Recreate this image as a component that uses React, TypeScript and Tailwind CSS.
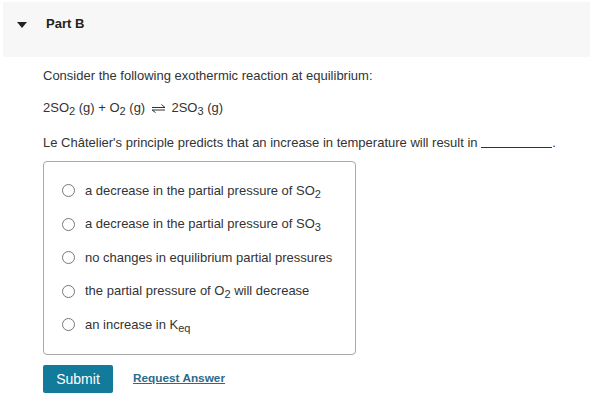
import React, { useState } from 'react';

const Sub = ({ children }: { children: React.ReactNode }) => (
  <sub className="text-[11px] relative top-[3px] align-baseline">{children}</sub>
);

const options = [
  { id: 'a', label: <>a decrease in the partial pressure of SO<Sub>2</Sub></> },
  { id: 'b', label: <>a decrease in the partial pressure of SO<Sub>3</Sub></> },
  { id: 'c', label: <>no changes in equilibrium partial pressures</> },
  { id: 'd', label: <>the partial pressure of O<Sub>2</Sub> will decrease</> },
  { id: 'e', label: <>an increase in K<Sub>eq</Sub></> },
];

const EqArrow = () => (
  <svg width="15" height="9" viewBox="0 0 15 9" className="inline-block mx-[2px] align-middle">
    <path d="M1 3.5 H14 L10.5 0.5" fill="none" stroke="#333" strokeWidth="1" />
    <path d="M14 6 H1 L4.5 8.5" fill="none" stroke="#333" strokeWidth="1" />
  </svg>
);

export default function App() {
  const [selected, setSelected] = useState<string | null>(null);

  return (
    <div className="w-[590px] h-[408px] bg-white text-[#333] font-['Liberation_Sans',Arial,sans-serif] pt-[2px] pl-[3px]">
      {/* Header */}
      <div className="h-[55px] bg-[#f7f7f7] flex items-start pt-[14px]">
        <svg width="10" height="6" viewBox="0 0 10 6" className="ml-[14px] mt-[6px]">
          <path d="M0 0 H10 L5 6 Z" fill="#222" />
        </svg>
        <span className="ml-[19px] text-[13px] leading-[16px] font-bold text-[#222]">Part B</span>
      </div>

      <div className="pl-[40px] pt-[11px] text-[13px]">
        <p className="leading-[16px]">Consider the following exothermic reaction at equilibrium:</p>
        <p className="mt-[16px] leading-[16px]">
          2SO<Sub>2</Sub> (g) + O<Sub>2</Sub> (g) <EqArrow /> 2SO<Sub>3</Sub> (g)
        </p>
        <p className="mt-[19px] leading-[16px]">
          Le Châtelier's principle predicts that an increase in temperature will result in{' '}
          <span className="inline-block w-[71px] border-b border-[#333] translate-y-[1px]"></span>.
        </p>

        {/* Choices */}
        <div className="mt-[10px] w-[313px] h-[194px] border border-[#a8a8a8] rounded-[4px] pt-[12px] pl-[18px]">
          {options.map((o) => (
            <label key={o.id} className="flex items-center h-[33.5px] cursor-pointer">
              <span
                onClick={() => setSelected(o.id)}
                className="w-[13px] h-[13px] rounded-full border border-[#777] bg-white flex items-center justify-center"
              >
                {selected === o.id && <span className="w-[7px] h-[7px] rounded-full bg-[#333]" />}
              </span>
              <span className="ml-[10px] leading-[16px]">{o.label}</span>
            </label>
          ))}
        </div>

        {/* Actions */}
        <div className="mt-[10px] flex items-center">
          <button className="w-[70px] h-[28px] bg-[#127a9b] rounded-[2px] text-white text-[14px]">Submit</button>
          <a href="#" className="ml-[20px] text-[11.8px] font-bold text-[#2a6b8c] underline">Request Answer</a>
        </div>
      </div>
    </div>
  );
}
